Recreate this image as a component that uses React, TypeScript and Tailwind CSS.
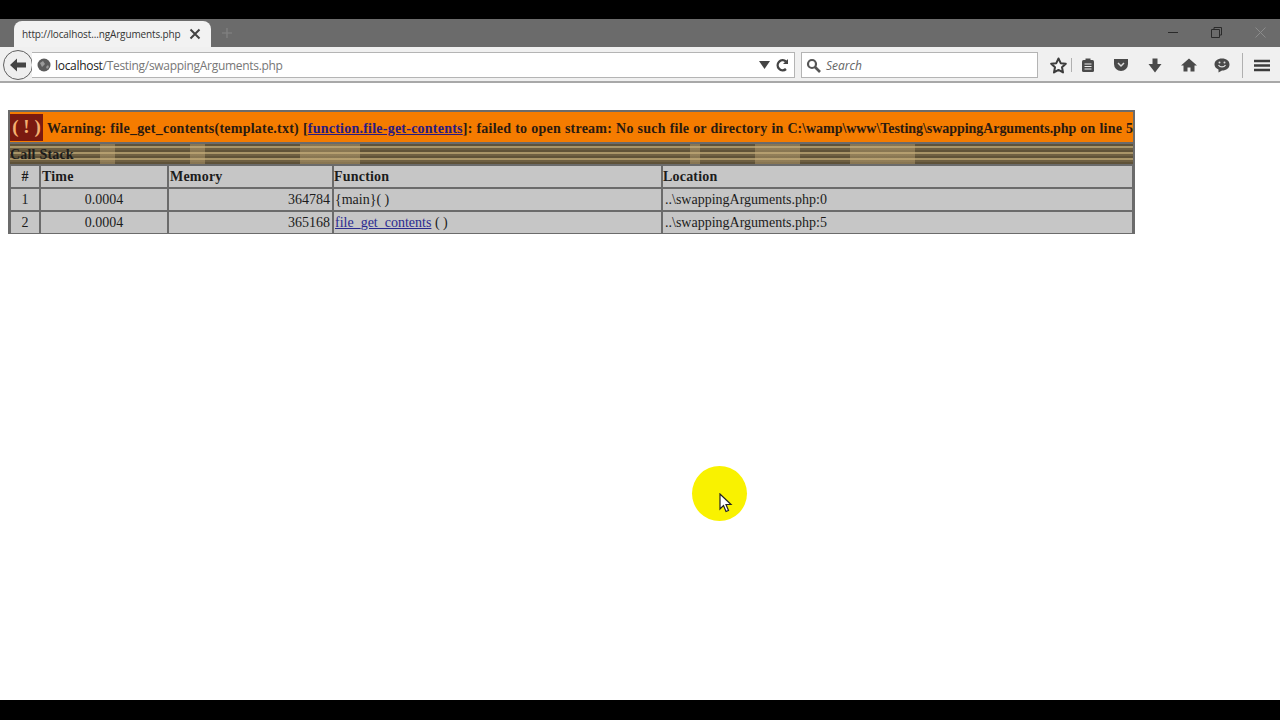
import React from "react";

const serif = "font-['Liberation_Serif',serif]";
const cell = "border border-[#6b6b6b] bg-[#c6c6c6] p-0 pt-[1px] leading-[20px] text-[14px] text-[#1c1c1c]";

function Back() {
  return (
    <div className="flex h-[30px] w-[30px] items-center justify-center rounded-full border border-[#606060] bg-[#eeeeee]">
      <svg width="18" height="16" viewBox="0 0 18 16"><path d="M1 8 8 1.5V5.5H17V10.5H8V14.5Z" fill="#444" /></svg>
    </div>
  );
}

function Toolbar() {
  return (
    <div className="flex h-[36px] items-center border-b-2 border-[#a8a8a8] bg-[#f0f0f0] pl-[3px] pt-[2px] text-[#404040]">
      <Back />
      <div className="ml-[-1px] flex h-[26px] w-[763px] items-center border-y border-r border-[#b4b4b4] bg-white pl-[5px] font-['Open_Sans',sans-serif] text-[12px] tracking-[-0.3px]">
        <svg width="14" height="14" viewBox="0 0 14 14" className="mr-[4px] shrink-0"><circle cx="7" cy="7" r="6.5" fill="#5c5c5c" /><path d="M3 5 6 3 8 6 5 9ZM9 9l2-2 1 2-2 2Z" fill="#9a9a9a" /></svg>
        <span className="pt-[2px] text-[#222]">localhost</span>
        <span className="pt-[2px] text-[#777]">/Testing/swappingArguments.php</span>
        <svg width="11" height="8" viewBox="0 0 11 8" className="ml-auto mr-[5px] shrink-0"><path d="M0 0H11L5.5 8Z" fill="#444" /></svg>
        <svg width="13" height="13" viewBox="0 0 13 13" className="mr-[6px] shrink-0"><path d="M11 2.5A5 5 0 1 0 11 10" fill="none" stroke="#444" strokeWidth="2.4" /><path d="M8 5H13V0Z" fill="#444" /></svg>
      </div>
      <div className="ml-[6px] flex h-[26px] w-[237px] items-center border border-[#b4b4b4] bg-white pl-[4px] font-['Open_Sans',sans-serif] text-[12px] italic text-[#666]">
        <svg width="15" height="15" viewBox="0 0 15 15" className="mr-[5px]"><circle cx="6" cy="6" r="4" fill="none" stroke="#555" strokeWidth="2.2" /><path d="M9 9 14 14" stroke="#555" strokeWidth="2.6" /></svg>
        <span className="pt-[1px]">Search</span>
      </div>
      <div className="ml-[12px] flex items-center">
        <svg width="17" height="17" viewBox="0 0 17 17"><path d="M8.5 1.5 10.7 6.2 15.8 6.8 12 10.3 13 15.4 8.5 12.9 4 15.4 5 10.3 1.2 6.8 6.3 6.2Z" fill="#f4f4f4" stroke="#3c3c3c" strokeWidth="2" strokeLinejoin="round" /></svg>
        <div className="ml-[4px] h-[14px] w-px bg-[#b0b0b0]" />
        <svg width="14" height="15" viewBox="0 0 14 15" className="ml-[9px]"><rect x="1" y="2" width="12" height="12" rx="1.5" fill="#4a4a4a" /><rect x="4.5" y="0.5" width="5" height="3" fill="#4a4a4a" /><path d="M3.5 6H10.5M3.5 8.5H10.5M3.5 11H10.5" stroke="#eee" /></svg>
        <svg width="16" height="14" viewBox="0 0 16 14" className="ml-[18px]"><path d="M1 1H15V6A7 7 0 0 1 1 6Z" fill="#4a4a4a" /><path d="M5 5 8 8 11 5" fill="none" stroke="#ddd" strokeWidth="1.5" /></svg>
        <svg width="14" height="15" viewBox="0 0 14 15" className="ml-[19px]"><path d="M4.5 0.5H9.5V6H13.5L7 14.5.5 6H4.5Z" fill="#4a4a4a" /></svg>
        <svg width="16" height="14" viewBox="0 0 16 14" className="ml-[19px]"><path d="M8 0.5 16 7.5H13.5V13.5H9.5V9.5H6.5V13.5H2.5V7.5H0Z" fill="#4a4a4a" /></svg>
        <svg width="16" height="15" viewBox="0 0 16 15" className="ml-[17px]"><path d="M8 0.5C12.5 0.5 15.5 3 15.5 6.5S12.5 12.5 8 12.5L4.5 14.5V11.5C2 10.5.5 8.8.5 6.5.5 3 3.5.5 8 .5Z" fill="#4a4a4a" /><path d="M4.5 7C6 9.5 10 9.5 11.5 7" fill="none" stroke="#ddd" strokeWidth="1.3" /><circle cx="5.5" cy="4.5" r="1" fill="#ddd" /><circle cx="10.5" cy="4.5" r="1" fill="#ddd" /></svg>
        <div className="ml-[12px] h-[25px] w-px bg-[#b0b0b0]" />
        <svg width="16" height="13" viewBox="0 0 16 13" className="ml-[11px]"><path d="M0 2H16M0 6.5H16M0 11H16" stroke="#3c3c3c" strokeWidth="2.4" /></svg>
      </div>
    </div>
  );
}

function TabStrip() {
  return (
    <div className="flex h-[28px] items-end bg-[#6b6b6b] pl-[14px]">
      <div className="flex h-[26px] w-[197px] items-center rounded-t-[8px] bg-[#f2f2f2] pl-[8px] font-['Open_Sans',sans-serif] text-[10px] tracking-[-0.13px] text-[#333]">
        <span className="w-[167px] whitespace-nowrap pt-[1px]">http://localhost...ngArguments.php</span>
        <svg width="12" height="12" viewBox="0 0 12 12"><path d="M1.5 1.5 10.5 10.5M10.5 1.5 1.5 10.5" stroke="#444" strokeWidth="2" /></svg>
      </div>
      <svg width="12" height="12" viewBox="0 0 12 12" className="mb-[8px] ml-[10px]"><path d="M6 1V11M1 6H11" stroke="#7e7e7e" strokeWidth="1.6" /></svg>
      <div className="mb-[9px] ml-auto flex items-center">
        <div className="h-px w-[10px] bg-[#2a2a2a]" />
        <svg width="11" height="11" viewBox="0 0 11 11" className="ml-[33px]"><path d="M3 2.5V.5H10.5V8H8.5M.5 2.5H8.5V10.5H.5Z" fill="none" stroke="#2a2a2a" /></svg>
        <svg width="11" height="11" viewBox="0 0 11 11" className="ml-[33px] mr-[14px]"><path d="M.5.5 10.5 10.5M10.5.5.5 10.5" stroke="#8c8c8c" /></svg>
      </div>
    </div>
  );
}

function ErrorTable() {
  return (
    <table className={`ml-[8px] mt-[27px] w-[1127px] table-fixed border-separate border-spacing-0 border-x-2 border-t-2 border-[#6b6b6b] bg-[#6b6b6b] ${serif}`}>
      <colgroup>
        <col className="w-[30px]" />
        <col className="w-[128px]" />
        <col className="w-[165px]" />
        <col className="w-[329px]" />
        <col />
      </colgroup>
      <tbody>
        <tr>
          <td colSpan={5} className="border-b-2 border-[#6b6b6b] bg-[#f57c00] p-0 text-[14px] font-bold leading-[20px] text-[#2a1a10]">
            <div className="flex h-[30px] items-center overflow-hidden whitespace-nowrap">
              <span className="mr-[4px] flex h-[27px] w-[33px] shrink-0 items-center justify-center bg-[#7a1a10] text-[19px] text-[#f5b070]">( ! )</span>
              <span className="pt-[4px] tracking-[0.23px] [word-spacing:0.2px]">Warning: file_get_contents(template.txt) [<a className="text-[#2a1a80] underline">function.file-get-contents</a>]: failed to open stream: No such file or directory in <span className="tracking-[-0.05px]">C:\wamp\www\Testing\swappingArguments.php</span> on line 5</span>
            </div>
          </td>
        </tr>
        <tr>
          <td colSpan={5} className="border-b border-[#6b6b6b] bg-[linear-gradient(90deg,transparent_90px,#c8ad7a66_90px,#c8ad7a66_105px,transparent_105px,transparent_180px,#c8ad7a66_180px,#c8ad7a66_195px,transparent_195px,transparent_290px,#c8ad7a66_290px,#c8ad7a66_350px,transparent_350px,transparent_680px,#c8ad7a66_680px,#c8ad7a66_690px,transparent_690px,transparent_745px,#c8ad7a66_745px,#c8ad7a66_790px,transparent_790px,transparent_840px,#c8ad7a66_840px,#c8ad7a66_905px,transparent_905px),repeating-linear-gradient(180deg,#5f5238_0px,#5f5238_2px,#a89468_2px,#a89468_4px,#6e5f42_4px,#6e5f42_6px)] p-0 text-[14px] font-bold leading-[19px] tracking-[0.2px] text-[#1c1c1c]"><span className="block pt-[1px]">Call Stack</span></td>
        </tr>
        <tr className="font-bold tracking-[0.2px]">
          <td className={`${cell} text-center`}>#</td>
          <td className={`${cell} pl-[1px]`}>Time</td>
          <td className={`${cell} pl-[1px]`}>Memory</td>
          <td className={cell}>Function</td>
          <td className={cell}>Location</td>
        </tr>
        <tr>
          <td className={`${cell} text-center`}>1</td>
          <td className={`${cell} text-center`}>0.0004</td>
          <td className={`${cell} pr-[2px] text-right`}>364784</td>
          <td className={`${cell} pl-[1px]`}>{"{main}( )"}</td>
          <td className={`${cell} pl-[2px]`}>..\swappingArguments.php:0</td>
        </tr>
        <tr>
          <td className={`${cell} text-center`}>2</td>
          <td className={`${cell} text-center`}>0.0004</td>
          <td className={`${cell} pr-[2px] text-right`}>365168</td>
          <td className={`${cell} pl-[1px]`}><a className="text-[#2a2a90] underline">file_get_contents</a> ( )</td>
          <td className={`${cell} pl-[2px]`}>..\swappingArguments.php:5</td>
        </tr>
      </tbody>
    </table>
  );
}

export default function App() {
  return (
    <div className="relative flex h-[720px] w-[1280px] flex-col overflow-hidden bg-black">
      <div className="h-[19px] shrink-0" />
      <TabStrip />
      <Toolbar />
      <div className="flex-1 bg-white">
        <ErrorTable />
      </div>
      <div className="h-[20px] shrink-0" />
      <div className="absolute left-[692px] top-[466px] h-[55px] w-[55px] rounded-full bg-[#f9f200]" />
      <svg width="14" height="20" viewBox="0 0 14 20" className="absolute left-[719px] top-[493px]">
        <path d="M1 1V16L4.5 12.5 7 18.5 9.5 17.5 7 11.5H12Z" fill="#fff" stroke="#222" strokeWidth="1.2" />
      </svg>
    </div>
  );
}
